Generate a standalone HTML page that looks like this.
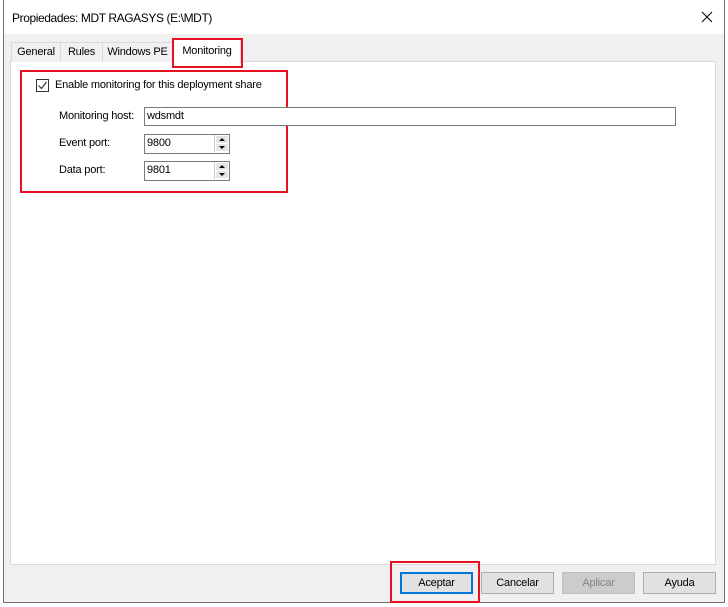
<!DOCTYPE html>
<html><head><style>
*{box-sizing:border-box;margin:0;padding:0}
body{width:728px;height:607px;background:#fff;position:relative;overflow:hidden;font-family:"Liberation Sans",sans-serif;font-size:11px;letter-spacing:-0.2px;color:#000}
.a{position:absolute}
.win{left:3px;top:0;width:722px;height:603px;border:1px solid #707070;border-top:none;background:#f0f0f0}
.title{left:4px;top:0;width:720px;height:34px;background:#fff}
.panel{left:10px;top:61px;width:706px;height:504px;background:#fff;border:1px solid #d9d9d9}
.tab{top:42px;height:20px;border:1px solid #d9d9d9;border-bottom:none;background:#f0f0f0;text-align:center;line-height:19px}
.red{border:2px solid #e81123}
.inp{border:1px solid #7a7a7a;background:#fff;padding-left:2px;line-height:17px}
.spin{width:15px;height:17px;position:absolute;right:0;top:0;border-left:1px solid #ccc}
.btn{top:572px;width:73px;height:22px;border:1px solid #adadad;background:#e1e1e1;text-align:center;line-height:20px}
</style></head><body>
<div class="a win"></div>
<div class="a title"></div>
<div class="a" style="left:12px;top:11px;font-size:12px;letter-spacing:-0.4px">Propiedades: MDT RAGASYS (E:\MDT)</div>
<svg class="a" style="left:701px;top:11px" width="12" height="12"><path d="M1 1L11 11M11 1L1 11" stroke="#000" stroke-width="1"/></svg>
<div class="a panel"></div>
<div class="a tab" style="left:11px;width:50px">General</div>
<div class="a tab" style="left:60px;width:43px">Rules</div>
<div class="a tab" style="left:102px;width:71px">Windows PE</div>
<div class="a" style="left:173px;top:39px;width:68px;height:24px;background:#fff;border:1px solid #d9d9d9;border-bottom:none;text-align:center;line-height:22px">Monitoring</div>
<div class="a red" style="left:172px;top:38px;width:71px;height:30px"></div>
<div class="a red" style="left:20px;top:70px;width:268px;height:123px"></div>
<div class="a" style="left:36px;top:79px;width:13px;height:13px;border:1px solid #333;background:#fff"></div>
<svg class="a" style="left:37px;top:80px" width="11" height="11"><path d="M1.5 5.5L4.5 8.5L9.5 2" fill="none" stroke="#333" stroke-width="1.2"/></svg>
<div class="a" style="left:55px;top:79px">Enable monitoring for this deployment share</div>
<div class="a" style="left:59px;top:110px">Monitoring host:</div>
<div class="a" style="left:59px;top:137px">Event port:</div>
<div class="a" style="left:59px;top:164px">Data port:</div>
<div class="a inp" style="left:144px;top:107px;width:532px;height:19px">wdsmdt</div>
<div class="a inp" style="left:144px;top:134px;width:86px;height:20px">9800<div class="spin"><svg width="14" height="17"><rect x="1" y="1" width="12" height="7" fill="#e5e5e5"/><rect x="1" y="9" width="12" height="7" fill="#e5e5e5"/><path d="M4 6L7 3L10 6Z M4 11L7 14L10 11Z" fill="#000"/></svg></div></div>
<div class="a inp" style="left:144px;top:161px;width:86px;height:20px">9801<div class="spin"><svg width="14" height="17"><rect x="1" y="1" width="12" height="7" fill="#e5e5e5"/><rect x="1" y="9" width="12" height="7" fill="#e5e5e5"/><path d="M4 6L7 3L10 6Z M4 11L7 14L10 11Z" fill="#000"/></svg></div></div>
<div class="a btn" style="left:400px;border:2px solid #0078d7;line-height:18px">Aceptar</div>
<div class="a red" style="left:390px;top:561px;width:90px;height:42px"></div>
<div class="a btn" style="left:481px">Cancelar</div>
<div class="a btn" style="left:562px;color:#838383;background:#ccc;border-color:#bfbfbf">Aplicar</div>
<div class="a btn" style="left:643px">Ayuda</div>
</body></html>
